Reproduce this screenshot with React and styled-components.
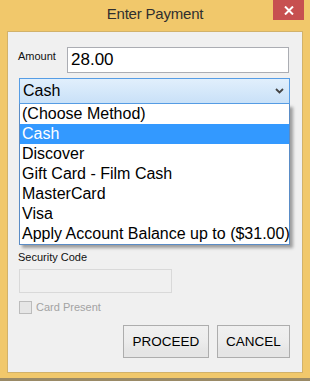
import styled, { createGlobalStyle } from "styled-components";

const GlobalStyle = createGlobalStyle`
  html, body {
    margin: 0;
    padding: 0;
    background: #9a8a66;
  }
  body {
    width: 310px;
    height: 381px;
    overflow: hidden;
    font-family: "Liberation Sans", Arial, sans-serif;
  }
`;

const Window = styled.div`
  width: 310px;
  height: 378px;
  background: #f1c86b;
  display: flex;
  flex-direction: column;
  box-sizing: border-box;
`;

const TitleBar = styled.div`
  height: 31px;
  display: grid;
  grid-template-columns: 1fr auto 1fr;
  align-items: start;
`;

const Title = styled.div`
  grid-column: 2;
  padding-top: 5px;
  font-family: "Liberation Sans", Arial, sans-serif;
  font-size: 15px;
  color: #2f2f2f;
  letter-spacing: -0.2px;
`;

const CloseButton = styled.div`
  grid-column: 3;
  justify-self: end;
  margin-right: 6px;
  width: 31px;
  height: 20px;
  background: #c75050;
  display: flex;
  align-items: center;
  justify-content: center;
`;

const Client = styled.div`
  flex: 1;
  margin: 0 7px 5px 7px;
  border: 1px solid #d2b26a;
  background: #f0f0f0;
  padding: 15px 12px 0 11px;
  display: flex;
  flex-direction: column;
  position: relative;
`;

const Row = styled.div`
  display: flex;
  align-items: flex-start;
`;

const Label = styled.div`
  font-size: 11px;
  line-height: 13px;
  color: ${(p) => (p.$disabled ? "#a3a3a3" : "#111")};
  width: ${(p) => p.$width || "auto"};
  margin-left: ${(p) => p.$offset || "0"};
  padding-top: ${(p) => p.$top || "0"};
`;

const TextBox = styled.div`
  box-sizing: border-box;
  width: ${(p) => p.$width};
  height: ${(p) => p.$height};
  margin-top: ${(p) => p.$top || "0"};
  border: 1px solid ${(p) => (p.$disabled ? "#d9d9d9" : "#abadb3")};
  background: ${(p) => (p.$disabled ? "#f0f0f0" : "#fff")};
  font-size: 17px;
  line-height: 24px;
  padding-left: 3px;
  color: #000;
`;

const ComboWrap = styled.div`
  position: relative;
  margin-top: 5px;
`;

const Combo = styled.div`
  box-sizing: border-box;
  height: 26px;
  border: 1px solid #569de5;
  background: linear-gradient(#e1effc, #c9e1f8);
  display: flex;
  align-items: center;
  justify-content: space-between;
  padding: 0 5px 0 3px;
  font-size: 16px;
  color: #000;
`;

const DropList = styled.div`
  position: absolute;
  top: 26px;
  left: 0;
  right: 0;
  box-sizing: border-box;
  border: 1px solid #5a8cc6;
  border-top: none;
  background: #fff;
  box-shadow: 3px 3px 3px rgba(0, 0, 0, 0.35);
  z-index: 2;
`;

const Option = styled.div`
  height: 20px;
  line-height: 20px;
  padding-left: 2px;
  font-size: 16px;
  white-space: nowrap;
  background: ${(p) => (p.$selected ? "#3399ff" : "transparent")};
  color: ${(p) => (p.$selected ? "#fff" : "#000")};
`;

const HiddenFields = styled.div`
  height: 147px;
`;

const CheckRow = styled.div`
  display: flex;
  align-items: center;
  gap: 4px;
  margin-top: 8px;
`;

const CheckBox = styled.div`
  box-sizing: border-box;
  width: 13px;
  height: 13px;
  border: 1px solid #bcbcbc;
  background: #e6e6e6;
`;

const ButtonRow = styled.div`
  display: flex;
  justify-content: flex-end;
  gap: 8px;
  margin-top: 11px;
`;

const Button = styled.div`
  box-sizing: border-box;
  width: ${(p) => p.$width};
  height: 33px;
  border: 1px solid #adadad;
  background: linear-gradient(#f0f0f0 0%, #ececec 50%, #e5e5e5 80%, #e5e5e5 100%);
  display: flex;
  align-items: center;
  justify-content: center;
  font-size: 13.5px;
  color: #000;
`;

const methods = [
  "(Choose Method)",
  "Cash",
  "Discover",
  "Gift Card - Film Cash",
  "MasterCard",
  "Visa",
  "Apply Account Balance up to ($31.00)",
];

export default function App() {
  return (
    <>
      <GlobalStyle />
      <Window>
        <TitleBar>
          <Title>Enter Payment</Title>
          <CloseButton>
            <svg width="10" height="9" viewBox="0 0 10 9">
              <path d="M1 0.5 L9 8.5 M9 0.5 L1 8.5" stroke="#fff" strokeWidth="2" />
            </svg>
          </CloseButton>
        </TitleBar>
        <Client>
          <Row>
            <Label $width="49px" $offset="-1px" $top="3px">
              Amount
            </Label>
            <TextBox $width="222px" $height="26px">
              28.00
            </TextBox>
          </Row>
          <ComboWrap>
            <Combo>
              <span>Cash</span>
              <svg width="9" height="6" viewBox="0 0 9 6">
                <path d="M1 1 L4.5 4.5 L8 1" stroke="#444" strokeWidth="1.8" fill="none" />
              </svg>
            </Combo>
            <DropList>
              {methods.map((m) => (
                <Option key={m} $selected={m === "Cash"}>
                  {m}
                </Option>
              ))}
            </DropList>
          </ComboWrap>
          <HiddenFields />
          <Label $offset="-1px">Security Code</Label>
          <TextBox $width="153px" $height="24px" $top="5px" $disabled />
          <CheckRow>
            <CheckBox />
            <Label $disabled>Card Present</Label>
          </CheckRow>
          <ButtonRow>
            <Button $width="86px">PROCEED</Button>
            <Button $width="73px">CANCEL</Button>
          </ButtonRow>
        </Client>
      </Window>
    </>
  );
}
